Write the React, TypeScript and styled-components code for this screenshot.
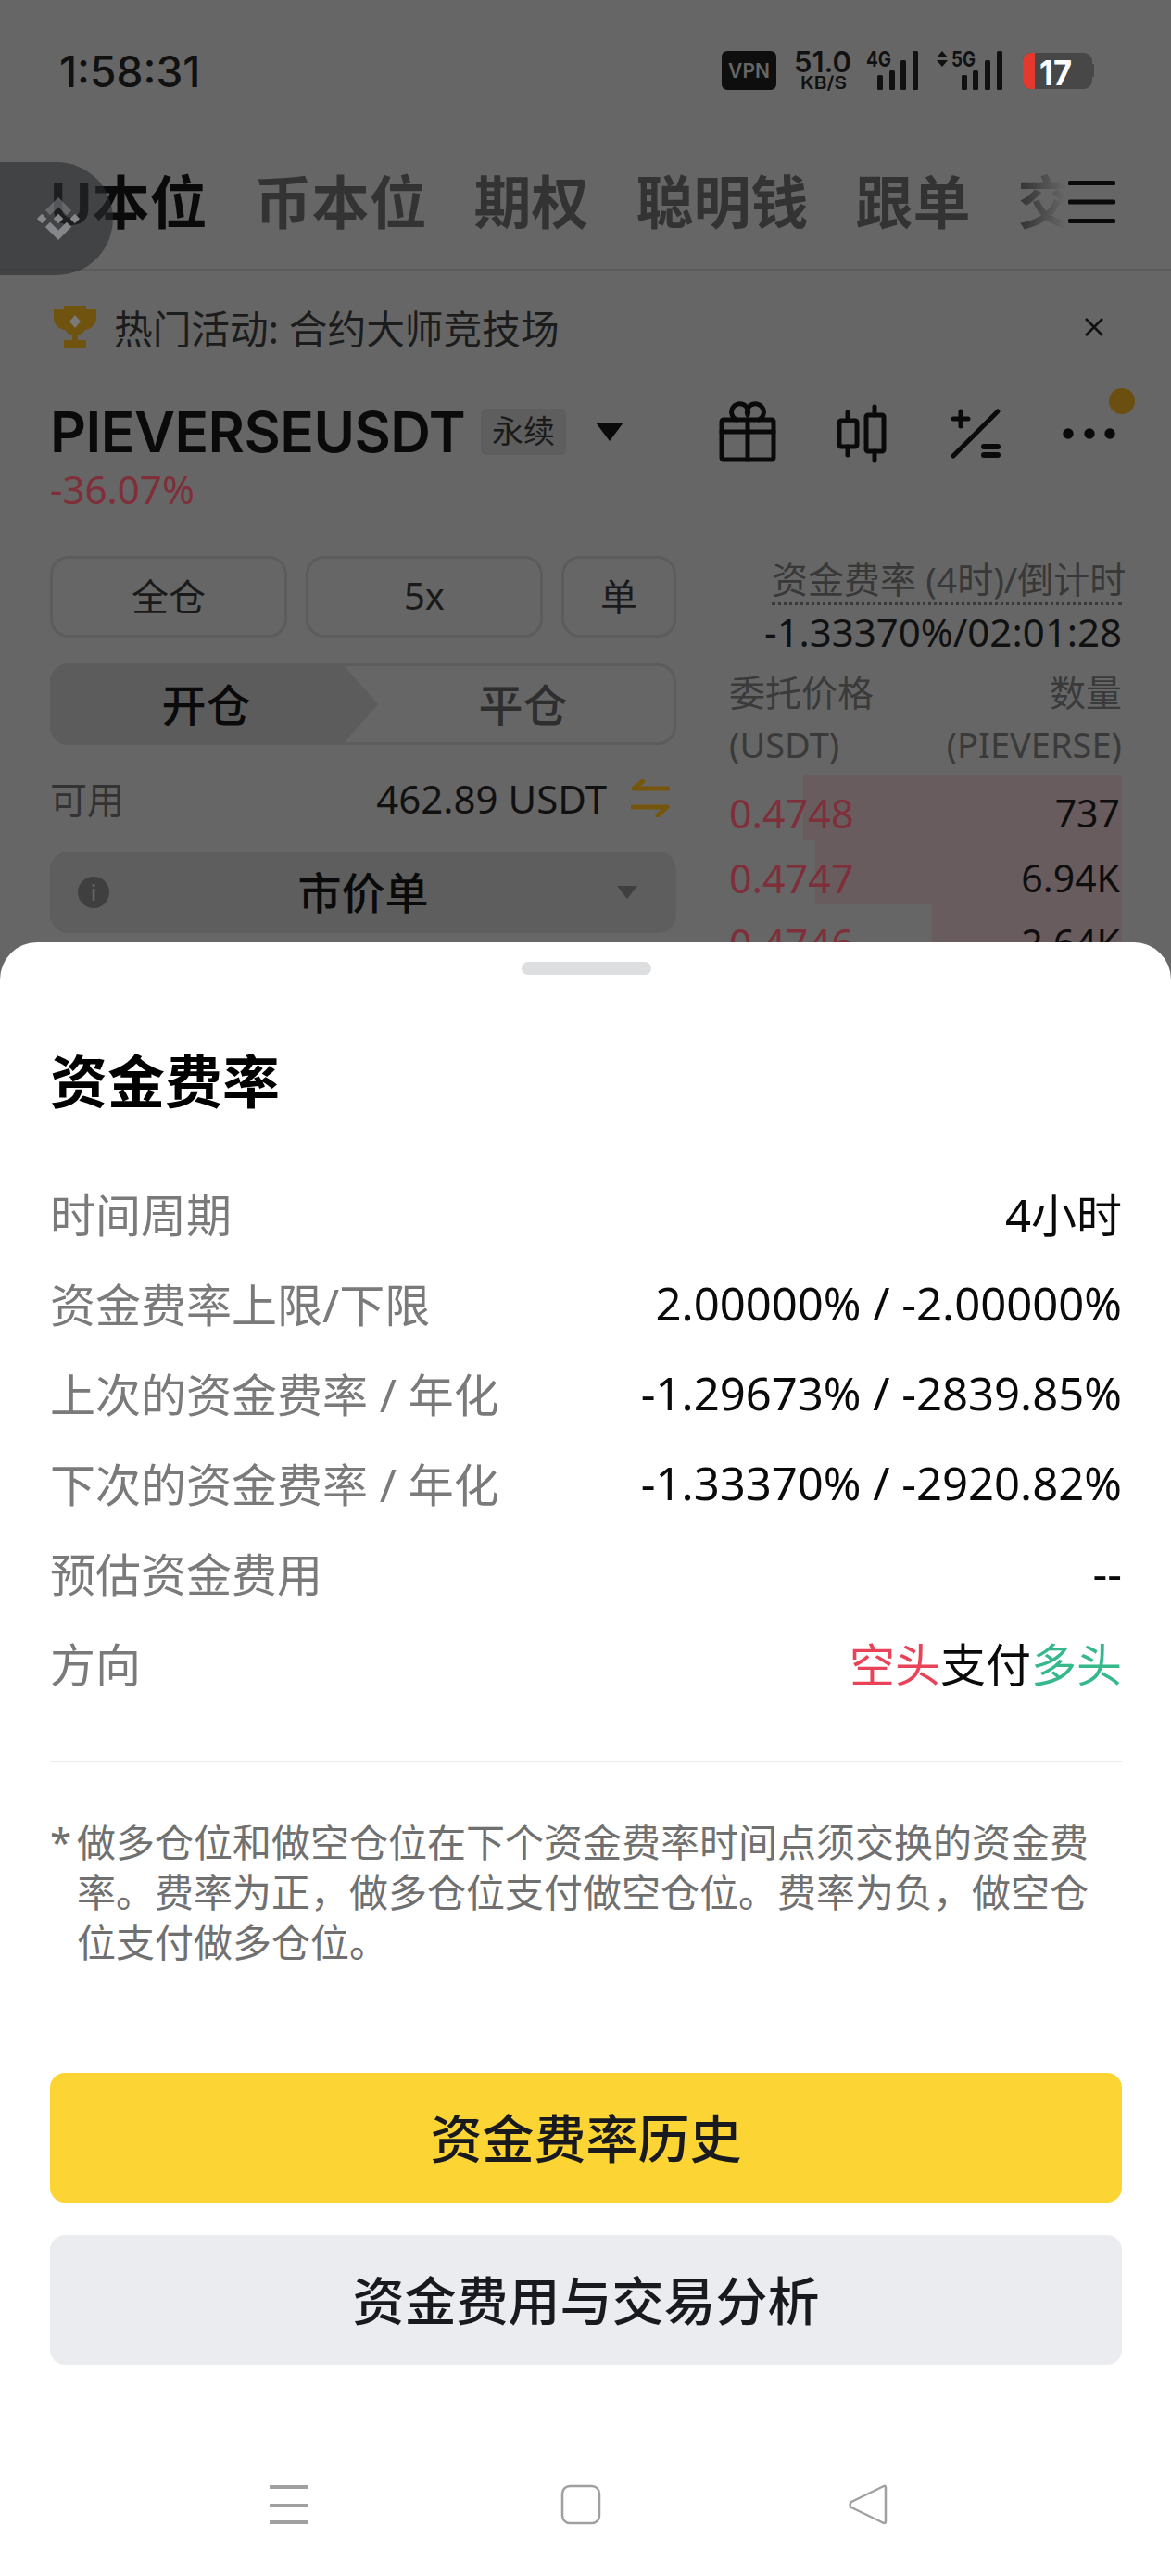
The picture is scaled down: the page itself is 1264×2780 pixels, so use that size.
import React from "react";
import styled, { createGlobalStyle } from "styled-components";

const FONT = `"Noto Sans", "Noto Sans CJK SC", sans-serif`;
const DISPLAY = `"Inter", "Noto Sans CJK SC", sans-serif`;

const Global = createGlobalStyle`
  html, body { margin: 0; padding: 0; background: #fff; }
  body { font-family: ${FONT}; }
  * { box-sizing: border-box; }
`;

const Phone = styled.div`
  width: 1264px;
  height: 2780px;
  overflow: hidden;
  display: flex;
  flex-direction: column;
  background: #666;
  position: relative;
`;

const Back = styled.div`
  height: 1017px;
  flex: none;
  overflow: hidden;
  position: relative;
`;

const StatusBar = styled.div`
  height: 176px;
  padding: 52px 81px 0 64px;
  display: flex;
  justify-content: space-between;
  align-items: flex-start;
`;

const Clock = styled.div`
  font-family: ${DISPLAY};
  font-size: 46px;
  line-height: 50px;
  font-weight: 500;
  color: #111;
`;

const StatusIcons = styled.svg`
  width: 404px;
  height: 60px;
  margin-top: -1px;
  font-family: ${DISPLAY};
`;

const TabBar = styled.div`
  height: 118px;
  margin-top: -2px;
  padding: 0 54px;
  display: flex;
  align-items: center;
  gap: 51px;
  border-bottom: 2px solid #5c5c5c;
  position: relative;
  overflow: hidden;
`;

const Tab = styled.div<{ $active?: boolean }>`
  font-family: ${DISPLAY};
  font-size: 62px;
  font-weight: 700;
  white-space: nowrap;
  padding-bottom: 34px;
  color: ${(p) => (p.$active ? "#0a0a0a" : "#333")};
`;

const TabFade = styled.div`
  position: absolute;
  right: 0;
  top: 0;
  bottom: 0;
  width: 164px;
  background: linear-gradient(90deg, rgba(102, 102, 102, 0), #666 50px);
`;

const Burger = styled.svg`
  position: absolute;
  right: 60px;
  top: 21px;
  width: 51px;
  height: 46px;
`;

const Floating = styled.div`
  position: absolute;
  left: 0;
  top: 175px;
  width: 122px;
  height: 122px;
  border-radius: 0 61px 61px 0;
  background: rgba(42, 44, 46, 0.6);
  display: flex;
  align-items: center;
  padding-left: 40px;
`;

const Notice = styled.div`
  height: 121px;
  padding: 0 71px 0 58px;
  display: flex;
  align-items: center;
  font-size: 41.7px;
  color: #1c1c1c;
  gap: 19px;
`;

const NoticeText = styled.div`
  flex: 1;
`;

const SymbolRow = styled.div`
  height: 106px;
  padding: 0 34px 0 54px;
  display: flex;
  align-items: center;
  position: relative;
`;

const Symbol = styled.div`
  font-family: ${DISPLAY};
  font-size: 60.5px;
  font-weight: 600;
  color: #0a0a0a;
  letter-spacing: -0.5px;
`;

const Perp = styled.div`
  margin-left: 17px;
  width: 92px;
  height: 50px;
  background: #5e5e5e;
  border-radius: 6px;
  font-size: 34px;
  line-height: 48px;
  text-align: center;
  color: #1a1a1a;
`;

const Caret = styled.div`
  margin-left: 32px;
  width: 0;
  height: 0;
  border-left: 15px solid transparent;
  border-right: 15px solid transparent;
  border-top: 20px solid #0a0a0a;
`;

const ToolIcons = styled.svg`
  margin-left: auto;
  width: 460px;
  height: 80px;
  overflow: visible;
`;

const Change = styled.div`
  padding-left: 54px;
  font-size: 42px;
  line-height: 40px;
  color: #7f2f39;
  margin-top: -11px;
`;

const Columns = styled.div`
  display: grid;
  grid-template-columns: 676px 424px;
  gap: 57px;
  padding: 52px 53px 0 54px;
`;

const LeftCol = styled.div`
  display: flex;
  flex-direction: column;
`;

const Chips = styled.div`
  display: grid;
  grid-template-columns: 256px 256px 124px;
  gap: 20px;
`;

const Chip = styled.div`
  height: 88px;
  border: 3px solid #5c5c5c;
  border-radius: 20px;
  display: flex;
  align-items: center;
  justify-content: center;
  padding-bottom: 4px;
  font-size: 40px;
  color: #1a1a1a;
`;

const Segment = styled.div`
  margin-top: 28px;
  height: 88px;
  border: 3px solid #5c5c5c;
  border-radius: 20px;
  display: flex;
  overflow: hidden;
  font-size: 48px;
  position: relative;
`;

const SegOn = styled.div`
  width: 351px;
  background: #5c5c5c;
  clip-path: polygon(0 0, 315px 0, 351px 50%, 315px 100%, 0 100%);
  display: flex;
  align-items: center;
  justify-content: center;
  padding: 0 20px 4px 0;
  font-weight: 500;
  color: #0a0a0a;
`;

const SegOff = styled.div`
  flex: 1;
  display: flex;
  align-items: center;
  justify-content: center;
  padding: 0 6px 4px 0;
  font-weight: 500;
  color: #2e2e2e;
`;

const Avail = styled.div`
  margin-top: 27px;
  height: 60px;
  display: flex;
  align-items: center;
  font-size: 40px;
  color: #333;
`;

const AvailValue = styled.div`
  margin-left: auto;
  font-size: 42px;
  color: #111;
`;

const Swap = styled.svg`
  margin-left: 26px;
  margin-right: 7px;
  width: 42px;
  height: 41px;
`;

const OrderType = styled.div`
  margin-top: 28px;
  height: 88px;
  border-radius: 20px;
  background: #5e5e5e;
  display: flex;
  align-items: center;
  padding: 0 42px 0 30px;
  font-size: 47px;
  font-weight: 500;
  color: #0a0a0a;
`;

const OrderLabel = styled.div`
  flex: 1;
  text-align: center;
  padding-bottom: 5px;
`;

const InfoDot = styled.div`
  width: 34px;
  height: 34px;
  border-radius: 50%;
  background: #3f3f3f;
  color: #666;
  font-size: 24px;
  line-height: 34px;
  text-align: center;
`;

const SmallCaret = styled.div`
  width: 0;
  height: 0;
  border-left: 11px solid transparent;
  border-right: 11px solid transparent;
  border-top: 14px solid #3f3f3f;
`;

const RightCol = styled.div`
  font-size: 39px;
  color: #333;
`;

const FundingLabel = styled.div`
  text-align: right;
  color: #383838;
  line-height: 46px;
  margin-top: 2px;
  margin-left: 46px;
  white-space: nowrap;
  border-bottom: 3px dotted #3a3a3a;
  padding-bottom: 2px;
`;

const FundingValue = styled.div`
  text-align: right;
  color: #111;
  font-size: 42px;
  line-height: 46px;
  margin-top: 6px;
  white-space: nowrap;
`;

const BookHead = styled.div`
  margin-top: 15px;
  display: flex;
  justify-content: space-between;
  line-height: 54px;
  color: #3a3a3a;
`;

const BookHeadUnit = styled(BookHead)`
  margin-top: 2px;
  font-size: 38px;
`;

const BookRows = styled.div`
  margin-top: 6px;
`;

const BookRow = styled.div`
  height: 70px;
  display: flex;
  justify-content: space-between;
  align-items: center;
  position: relative;
  padding: 12px 2px 0 0;
  font-size: 41px;
`;

const Depth = styled.div`
  position: absolute;
  top: 0;
  bottom: 0;
  right: 0;
  background: #695c5e;
`;

const Price = styled.span`
  color: #7f2f39;
  position: relative;
  font-size: 43px;
`;

const Qty = styled.span`
  color: #0e0e0e;
  position: relative;
`;

const Sheet = styled.div`
  flex: 1;
  background: #fff;
  border-radius: 40px 40px 0 0;
  padding: 0 53px 0 54px;
  display: flex;
  flex-direction: column;
  position: relative;
`;

const Handle = styled.div`
  align-self: center;
  margin-top: 21px;
  width: 140px;
  height: 14px;
  border-radius: 7px;
  background: #dddee0;
`;

const SheetTitle = styled.div`
  margin-top: 75px;
  font-size: 62px;
  line-height: 80px;
  font-weight: 700;
  color: #000;
`;

const InfoList = styled.div`
  margin-top: 53px;
  display: flex;
  flex-direction: column;
  border-bottom: 2px solid #eaecef;
  padding-bottom: 58px;
`;

const InfoRow = styled.div`
  height: 97px;
  display: flex;
  justify-content: space-between;
  align-items: center;
  font-size: 49px;
`;

const InfoKey = styled.div`
  color: #7a7a7a;
`;

const InfoVal = styled.div`
  color: #0a0a0a;
`;

const Short = styled.span`
  color: #e94359;
`;

const Long = styled.span`
  color: #35b88a;
`;

const Note = styled.div`
  margin-top: 59px;
  display: flex;
  font-size: 42px;
  line-height: 54px;
  color: #707070;
`;

const NoteStar = styled.div`
  width: 29px;
  flex: none;
`;

const PrimaryBtn = styled.div`
  margin-top: 114px;
  height: 140px;
  padding-bottom: 6px;
  border-radius: 16px;
  background: #fcd535;
  display: flex;
  align-items: center;
  justify-content: center;
  font-size: 56px;
  font-weight: 500;
  color: #181a20;
`;

const SecondaryBtn = styled(PrimaryBtn)`
  margin-top: 35px;
  background: #eaecef;
`;

const NavBar = styled.svg`
  position: absolute;
  left: 0;
  bottom: 0;
  width: 1264px;
  height: 180px;
`;

const depth = [344, 331, 205];
const rows = [
  ["0.4748", "737"],
  ["0.4747", "6.94K"],
  ["0.4746", "2.64K"],
];

export default function App() {
  return (
    <Phone>
      <Global />
      <Back>
        <StatusBar>
          <Clock>1:58:31</Clock>
          <StatusIcons viewBox="0 0 404 60">
            <rect x="0" y="4" width="59" height="42" rx="6" fill="#0e0e0e" />
            <text x="29.5" y="33" textAnchor="middle" fontSize="21" fontWeight="600" fill="#666">VPN</text>
            <text x="78" y="27" fontSize="31" fontWeight="600" fill="#111" textLength="62" lengthAdjust="spacingAndGlyphs">51.0</text>
            <text x="85" y="45" fontSize="19" fontWeight="600" fill="#111" textLength="50" lengthAdjust="spacingAndGlyphs">KB/S</text>
            <text x="156" y="21" fontSize="23" fontWeight="700" fill="#111" textLength="27" lengthAdjust="spacingAndGlyphs">4G</text>
            <g fill="#111">
              <rect x="168" y="30" width="6" height="16" rx="1.5" />
              <rect x="181" y="25" width="6" height="21" rx="1.5" />
              <rect x="193" y="14" width="6" height="32" rx="1.5" />
              <rect x="206" y="4" width="6" height="42" rx="1.5" />
              <path d="M232 11 l6 -7 l6 7z M232 14 l6 7 l6 -7z" />
            </g>
            <text x="248" y="21" fontSize="23" fontWeight="700" fill="#111" textLength="26" lengthAdjust="spacingAndGlyphs">5G</text>
            <g fill="#111">
              <rect x="259" y="30" width="6" height="16" rx="1.5" />
              <rect x="271" y="25" width="6" height="21" rx="1.5" />
              <rect x="284" y="14" width="6" height="32" rx="1.5" />
              <rect x="297" y="4" width="6" height="42" rx="1.5" />
            </g>
            <rect x="325" y="6" width="75" height="39" rx="9" fill="#474747" />
            <path d="M334 6 h4 v39 h-4 a9 9 0 0 1 -9 -9 v-21 a9 9 0 0 1 9 -9z" fill="#e5392f" />
            <rect x="400" y="18" width="2" height="14" rx="1" fill="#474747" />
            <text x="343" y="41" fontSize="37" fontWeight="700" fill="#fff" textLength="35" lengthAdjust="spacingAndGlyphs">17</text>
          </StatusIcons>
        </StatusBar>
        <TabBar>
          <Tab $active>U本位</Tab>
          <Tab>币本位</Tab>
          <Tab>期权</Tab>
          <Tab>聪明钱</Tab>
          <Tab>跟单</Tab>
          <Tab>交易</Tab>
          <TabFade />
          <Burger viewBox="0 0 51 46">
            <rect width="51" height="5" y="0" rx="1.5" fill="#0a0a0a" />
            <rect width="51" height="5" y="20.5" rx="1.5" fill="#0a0a0a" />
            <rect width="51" height="5" y="41" rx="1.5" fill="#0a0a0a" />
          </Burger>
        </TabBar>
        <Floating>
          <svg width="46" height="46" viewBox="0 0 32 32" fill="#85878a">
            <path opacity="0.55" d="M9.79 13.45L16 7.24l6.21 6.21 3.61-3.61L16 0 6.18 9.82z" />
            <path d="M0 15.97l3.61-3.61 3.61 3.61-3.61 3.61zM9.79 18.55L16 24.76l6.21-6.21 3.61 3.61L16 32l-9.82-9.82zM24.79 16l3.61-3.61L32 16l-3.61 3.61zM19.66 15.97h.01L16 12.3l-3.67 3.67 3.67 3.67 3.67-3.7z" />
          </svg>
        </Floating>
        <Notice>
          <svg width="46" height="46" viewBox="0 0 46 46">
            <path d="M11 0 h24 v4 h11 v9 c0 7 -5 12 -12 13 c-2 3 -5 5 -8 6 v5 h9 v9 h-24 v-9 h9 v-5 c-3 -1 -6 -3 -8 -6 c-7 -1 -12 -6 -12 -13 v-9 h11z" fill="#6f530f" />
            <path d="M23 10 l6 7 -6 7 -6 -7z" fill="#7a7a7a" />
          </svg>
          <NoticeText>热门活动: 合约大师竞技场</NoticeText>
          <svg width="24" height="24" viewBox="0 0 24 24">
            <path d="M3 3 L21 21 M21 3 L3 21" stroke="#111" strokeWidth="2.6" />
          </svg>
        </Notice>
        <SymbolRow>
          <Symbol>PIEVERSEUSDT</Symbol>
          <Perp>永续</Perp>
          <Caret />
          <ToolIcons viewBox="0 0 460 80">
            <g fill="none" stroke="#0a0a0a" strokeWidth="5" strokeLinecap="round" strokeLinejoin="round">
              <rect x="9" y="27" width="56" height="43" rx="2" />
              <path d="M9 40 h56 M37 27 v43" />
              <path d="M25 27 A9 9 0 1 1 37 22 A9 9 0 1 1 49 27" />
              <rect x="136" y="28" width="19" height="28" rx="2" />
              <rect x="165" y="22" width="19" height="39" rx="2" />
              <path d="M145 19 v9 M145 56 v9 M174 13 v9 M174 61 v10" />
              <path d="M259 66 L307 18 M259 26 h16 M267 18 v16" />
            </g>
            <path d="M292 56 h15 M292 65 h15" fill="none" stroke="#0a0a0a" strokeWidth="6" strokeLinecap="round" />
            <circle cx="383" cy="42" r="5.7" fill="#0a0a0a" />
            <circle cx="406" cy="42" r="5.7" fill="#0a0a0a" />
            <circle cx="428" cy="42" r="5.7" fill="#0a0a0a" />
            <circle cx="441" cy="7" r="14" fill="#6a4f10" />
          </ToolIcons>
        </SymbolRow>
        <Change>-36.07%</Change>
        <Columns>
          <LeftCol>
            <Chips>
              <Chip>全仓</Chip>
              <Chip>5x</Chip>
              <Chip>单</Chip>
            </Chips>
            <Segment>
              <SegOn>开仓</SegOn>
              <SegOff>平仓</SegOff>
            </Segment>
            <Avail>
              可用
              <AvailValue>462.89 USDT</AvailValue>
              <Swap viewBox="0 0 42 41" fill="none" stroke="#75560c" strokeWidth="5" strokeLinecap="round" strokeLinejoin="round">
                <path d="M40 10 H3 L13 2 M2 30 H39 L29 39" />
              </Swap>
            </Avail>
            <OrderType>
              <InfoDot>i</InfoDot>
              <OrderLabel>市价单</OrderLabel>
              <SmallCaret />
            </OrderType>
          </LeftCol>
          <RightCol>
            <FundingLabel>资金费率 (4时)/倒计时</FundingLabel>
            <FundingValue>-1.33370%/02:01:28</FundingValue>
            <BookHead>
              <span>委托价格</span>
              <span>数量</span>
            </BookHead>
            <BookHeadUnit>
              <span>(USDT)</span>
              <span>(PIEVERSE)</span>
            </BookHeadUnit>
            <BookRows>
              {rows.map((r, i) => (
                <BookRow key={r[0]}>
                  <Depth style={{ width: depth[i] }} />
                  <Price>{r[0]}</Price>
                  <Qty>{r[1]}</Qty>
                </BookRow>
              ))}
            </BookRows>
          </RightCol>
        </Columns>
      </Back>
      <Sheet>
        <Handle />
        <SheetTitle>资金费率</SheetTitle>
        <InfoList>
          <InfoRow><InfoKey>时间周期</InfoKey><InfoVal>4小时</InfoVal></InfoRow>
          <InfoRow><InfoKey>资金费率上限/下限</InfoKey><InfoVal>2.00000% / -2.00000%</InfoVal></InfoRow>
          <InfoRow><InfoKey>上次的资金费率 / 年化</InfoKey><InfoVal>-1.29673% / -2839.85%</InfoVal></InfoRow>
          <InfoRow><InfoKey>下次的资金费率 / 年化</InfoKey><InfoVal>-1.33370% / -2920.82%</InfoVal></InfoRow>
          <InfoRow><InfoKey>预估资金费用</InfoKey><InfoVal>--</InfoVal></InfoRow>
          <InfoRow><InfoKey>方向</InfoKey><InfoVal><Short>空头</Short>支付<Long>多头</Long></InfoVal></InfoRow>
        </InfoList>
        <Note>
          <NoteStar>*</NoteStar>
          <div>做多仓位和做空仓位在下个资金费率时间点须交换的资金费率。费率为正，做多仓位支付做空仓位。费率为负，做空仓位支付做多仓位。</div>
        </Note>
        <PrimaryBtn>资金费率历史</PrimaryBtn>
        <SecondaryBtn>资金费用与交易分析</SecondaryBtn>
        <NavBar viewBox="0 0 1264 180">
          <g fill="#a0a0a0">
            <rect x="291" y="82" width="42" height="4" />
            <rect x="291" y="102" width="42" height="4" />
            <rect x="291" y="120" width="42" height="4" />
          </g>
          <rect x="607" y="83" width="40" height="40" rx="8" fill="none" stroke="#a0a0a0" strokeWidth="2.5" />
          <path d="M954 83 L919 100 Q916 103 919 106 L954 123 Q956 123 956 121 V85 Q956 82 954 83Z" fill="none" stroke="#a0a0a0" strokeWidth="2.5" strokeLinejoin="round" />
        </NavBar>
      </Sheet>
    </Phone>
  );
}
